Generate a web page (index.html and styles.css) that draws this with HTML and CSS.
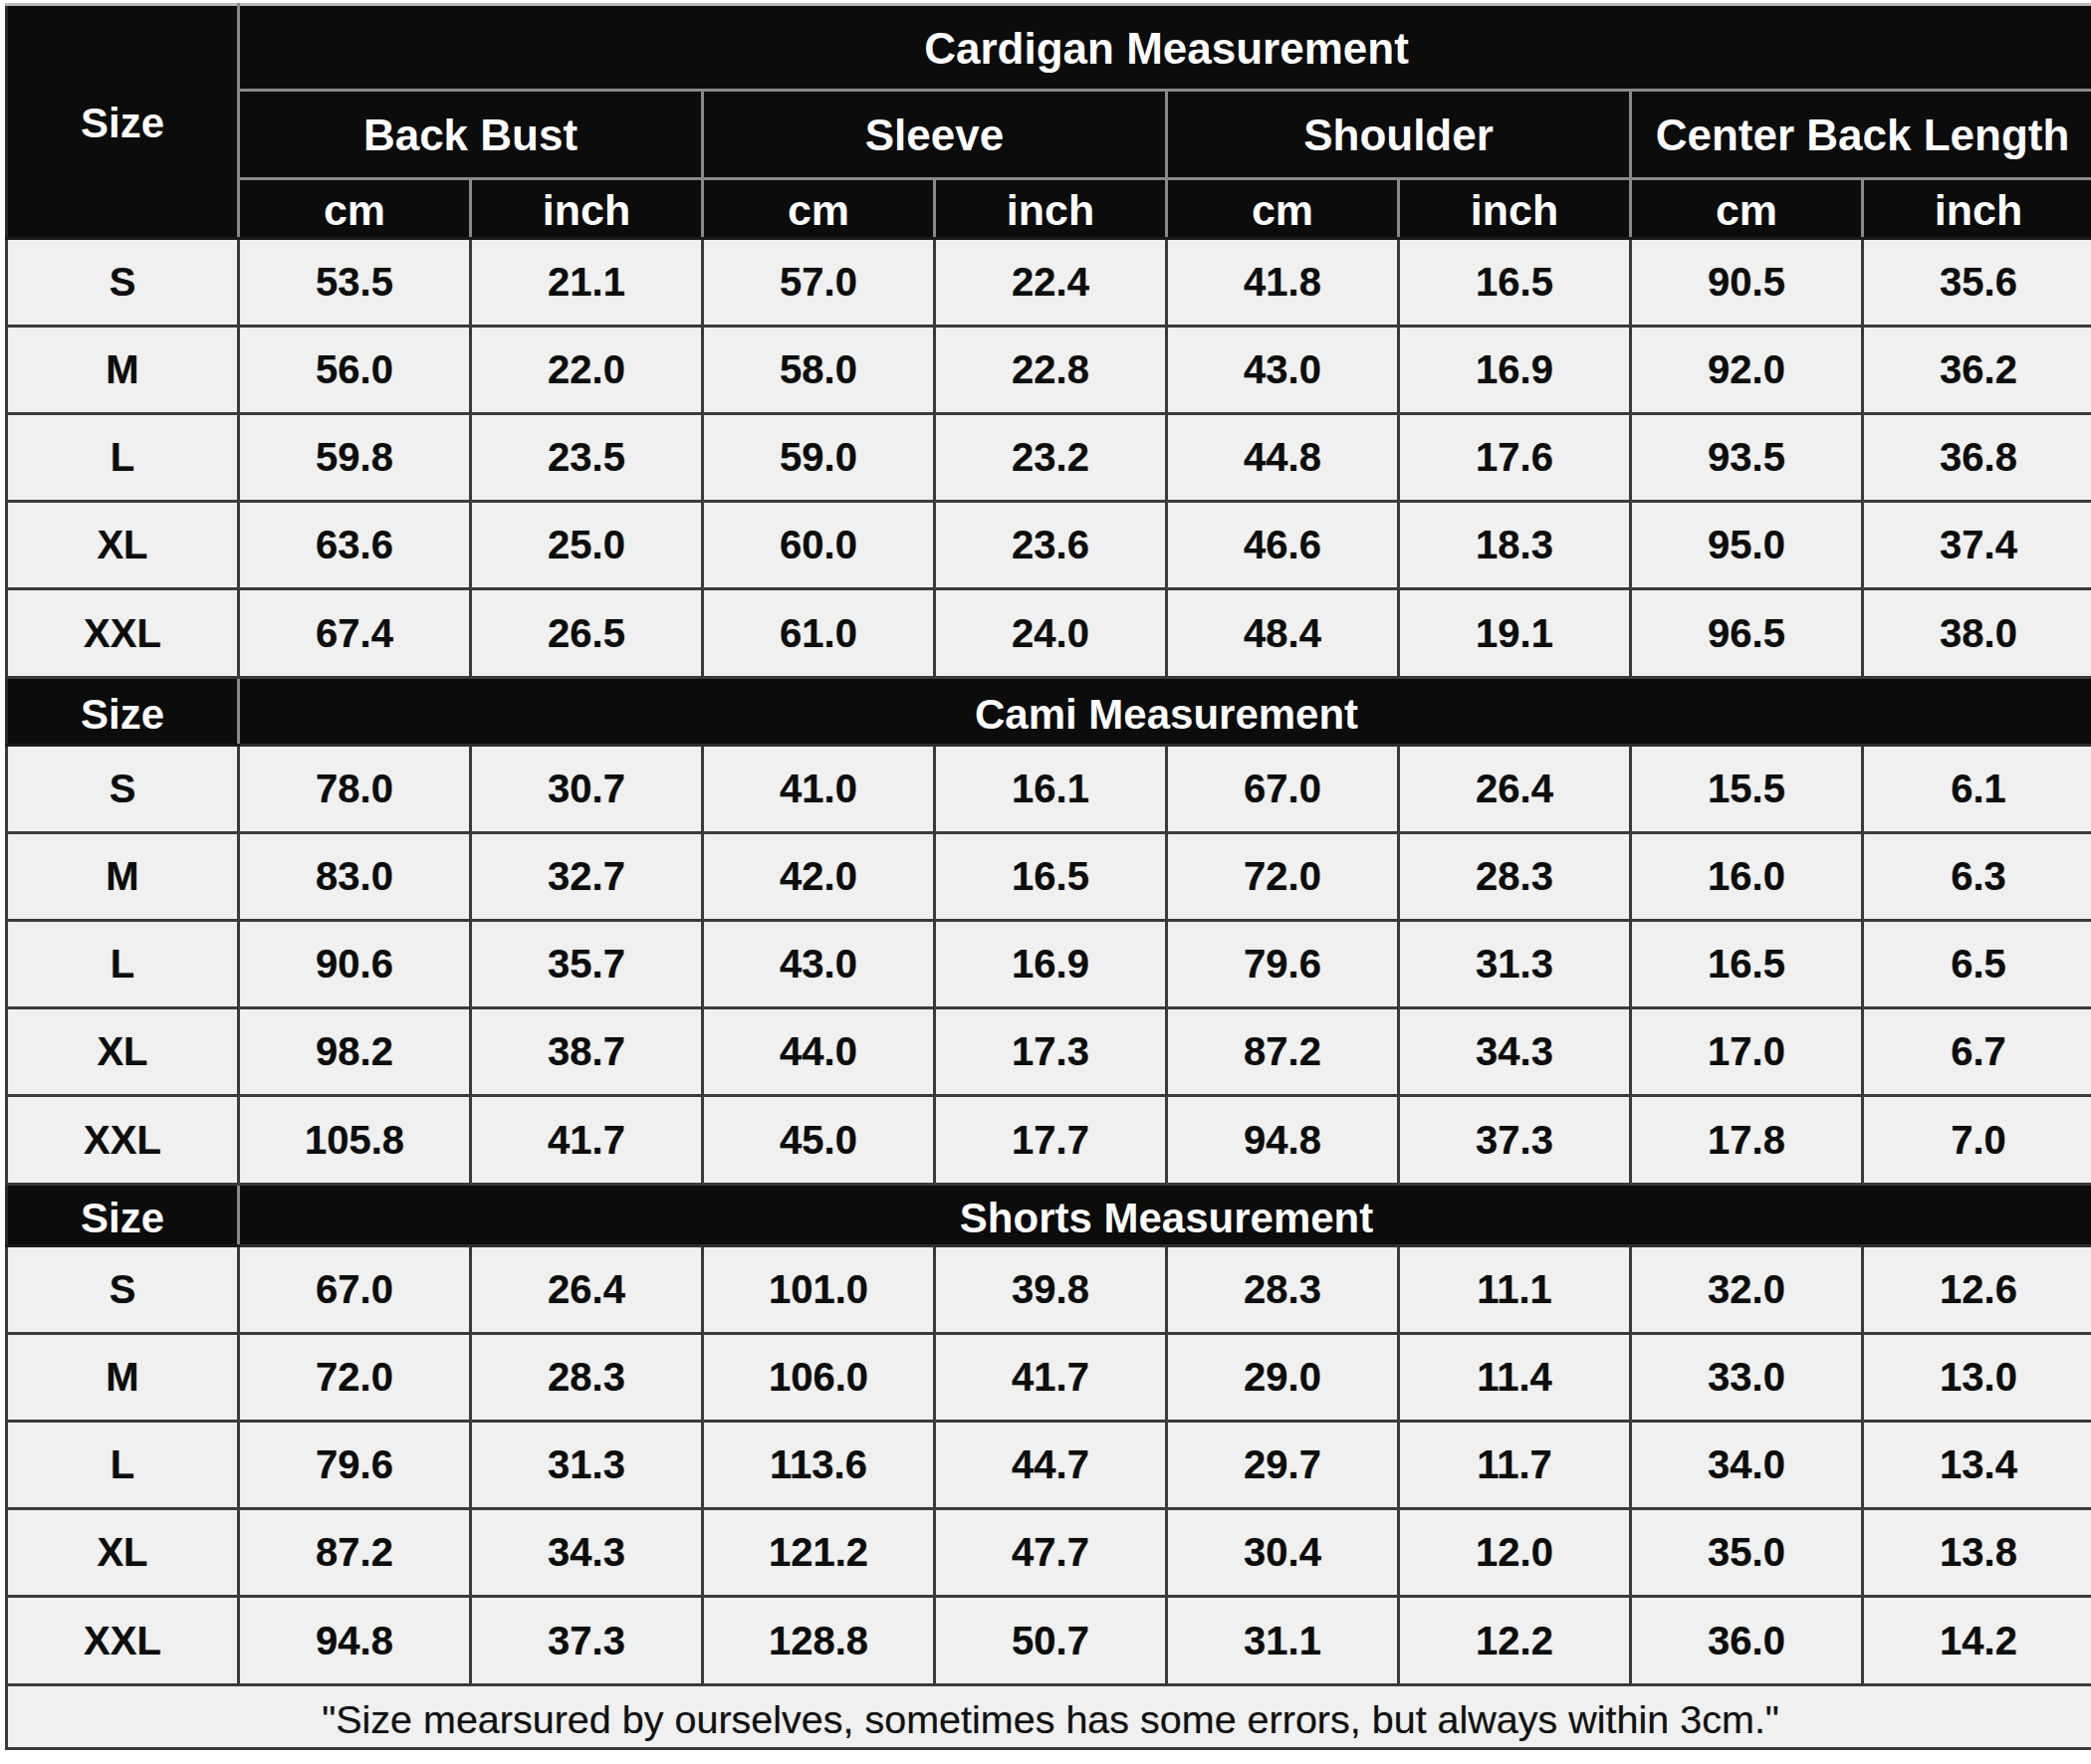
FILE: index.html
```html
<!DOCTYPE html>
<html lang="en">
<head>
<meta charset="utf-8">
<title>Size Chart</title>
<link rel="stylesheet" href="styles.css">
</head>
<body>
<div class="page">
<table class="chart">
  <colgroup>
    <col class="c-size"><col><col><col><col><col><col><col><col>
  </colgroup>
  <tbody>
    <tr class="h-title">
      <th class="h-size h-size-top" rowspan="3">Size</th>
      <th colspan="8">Cardigan Measurement</th>
    </tr>
    <tr class="h-group">
      <th colspan="2">Back Bust</th>
      <th colspan="2">Sleeve</th>
      <th colspan="2">Shoulder</th>
      <th colspan="2">Center Back Length</th>
    </tr>
    <tr class="h-unit">
      <th>cm</th><th>inch</th><th>cm</th><th>inch</th><th>cm</th><th>inch</th><th>cm</th><th>inch</th>
    </tr>
    <tr class="d"><td>S</td><td>53.5</td><td>21.1</td><td>57.0</td><td>22.4</td><td>41.8</td><td>16.5</td><td>90.5</td><td>35.6</td></tr>
    <tr class="d"><td>M</td><td>56.0</td><td>22.0</td><td>58.0</td><td>22.8</td><td>43.0</td><td>16.9</td><td>92.0</td><td>36.2</td></tr>
    <tr class="d"><td>L</td><td>59.8</td><td>23.5</td><td>59.0</td><td>23.2</td><td>44.8</td><td>17.6</td><td>93.5</td><td>36.8</td></tr>
    <tr class="d"><td>XL</td><td>63.6</td><td>25.0</td><td>60.0</td><td>23.6</td><td>46.6</td><td>18.3</td><td>95.0</td><td>37.4</td></tr>
    <tr class="d d-last"><td>XXL</td><td>67.4</td><td>26.5</td><td>61.0</td><td>24.0</td><td>48.4</td><td>19.1</td><td>96.5</td><td>38.0</td></tr>

    <tr class="h-sec h-cami">
      <th class="h-size">Size</th>
      <th colspan="8">Cami Measurement</th>
    </tr>
    <tr class="d"><td>S</td><td>78.0</td><td>30.7</td><td>41.0</td><td>16.1</td><td>67.0</td><td>26.4</td><td>15.5</td><td>6.1</td></tr>
    <tr class="d"><td>M</td><td>83.0</td><td>32.7</td><td>42.0</td><td>16.5</td><td>72.0</td><td>28.3</td><td>16.0</td><td>6.3</td></tr>
    <tr class="d"><td>L</td><td>90.6</td><td>35.7</td><td>43.0</td><td>16.9</td><td>79.6</td><td>31.3</td><td>16.5</td><td>6.5</td></tr>
    <tr class="d"><td>XL</td><td>98.2</td><td>38.7</td><td>44.0</td><td>17.3</td><td>87.2</td><td>34.3</td><td>17.0</td><td>6.7</td></tr>
    <tr class="d d-last"><td>XXL</td><td>105.8</td><td>41.7</td><td>45.0</td><td>17.7</td><td>94.8</td><td>37.3</td><td>17.8</td><td>7.0</td></tr>

    <tr class="h-sec h-shorts">
      <th class="h-size">Size</th>
      <th colspan="8">Shorts Measurement</th>
    </tr>
    <tr class="d"><td>S</td><td>67.0</td><td>26.4</td><td>101.0</td><td>39.8</td><td>28.3</td><td>11.1</td><td>32.0</td><td>12.6</td></tr>
    <tr class="d"><td>M</td><td>72.0</td><td>28.3</td><td>106.0</td><td>41.7</td><td>29.0</td><td>11.4</td><td>33.0</td><td>13.0</td></tr>
    <tr class="d"><td>L</td><td>79.6</td><td>31.3</td><td>113.6</td><td>44.7</td><td>29.7</td><td>11.7</td><td>34.0</td><td>13.4</td></tr>
    <tr class="d"><td>XL</td><td>87.2</td><td>34.3</td><td>121.2</td><td>47.7</td><td>30.4</td><td>12.0</td><td>35.0</td><td>13.8</td></tr>
    <tr class="d d-last"><td>XXL</td><td>94.8</td><td>37.3</td><td>128.8</td><td>50.7</td><td>31.1</td><td>12.2</td><td>36.0</td><td>14.2</td></tr>

    <tr class="note"><td colspan="9">"Size mearsured by ourselves, sometimes has some errors, but always within 3cm."</td></tr>
  </tbody>
</table>
</div>
</body>
</html>
```

FILE: styles.css
```css
html, body {
  margin: 0;
  padding: 0;
  background: #ffffff;
  overflow: hidden;
}

.page {
  width: 2100px;
  height: 1772px;
  overflow: hidden;
  padding: 3px 0 0 5px;
  box-sizing: border-box;
}

.chart {
  border-collapse: collapse;
  table-layout: fixed;
  width: 2097px;
  font-family: "Liberation Sans", Arial, sans-serif;
  font-weight: bold;
  text-align: center;
}

.chart col { width: 233px; }
.chart col.c-size { width: 233px; }

.chart th,
.chart td {
  padding: 0;
  text-align: center;
  vertical-align: middle;
  white-space: nowrap;
  overflow: hidden;
}

/* header cells */
.chart th {
  background: #0c0c0c;
  color: #ffffff;
  border: 3px solid #8a8a8a;
  font-size: 44px;
  text-shadow: 0 0 1px #000;
  padding-top: 2px;
}

.h-title { height: 86px; }
.h-title th { border-top-color: #b8b8b8; }
.h-group { height: 89px; }
.h-unit { height: 60px; }
.h-unit th { font-size: 43px; border-bottom-color: #1a1a1a; padding-top: 4px; }
.chart th.h-size { border-left-color: #2a2a2a; font-size: 42px; border-bottom-color: #1a1a1a; }
.chart th.h-size-top { padding-top: 4px; }

.h-sec th { border-top-color: #2e2e2e; border-bottom-color: #2e2e2e; font-size: 42px; padding-top: 7px; }
.h-cami { height: 68px; }
.h-shorts { height: 62px; }

/* data cells */
.d { height: 88px; }
.d-last { height: 89px; }
.chart td {
  background: #f0f0f0;
  color: #0d0d0d;
  border: 3px solid #3a3a3a;
  font-size: 40px;
  text-shadow: 0 0 1px rgba(0, 0, 0, 0.35);
}

.note { height: 64px; }
.note td {
  font-weight: normal;
  font-size: 39.5px;
  color: #111111;
  text-align: center;
  padding-top: 5px;
}
```
